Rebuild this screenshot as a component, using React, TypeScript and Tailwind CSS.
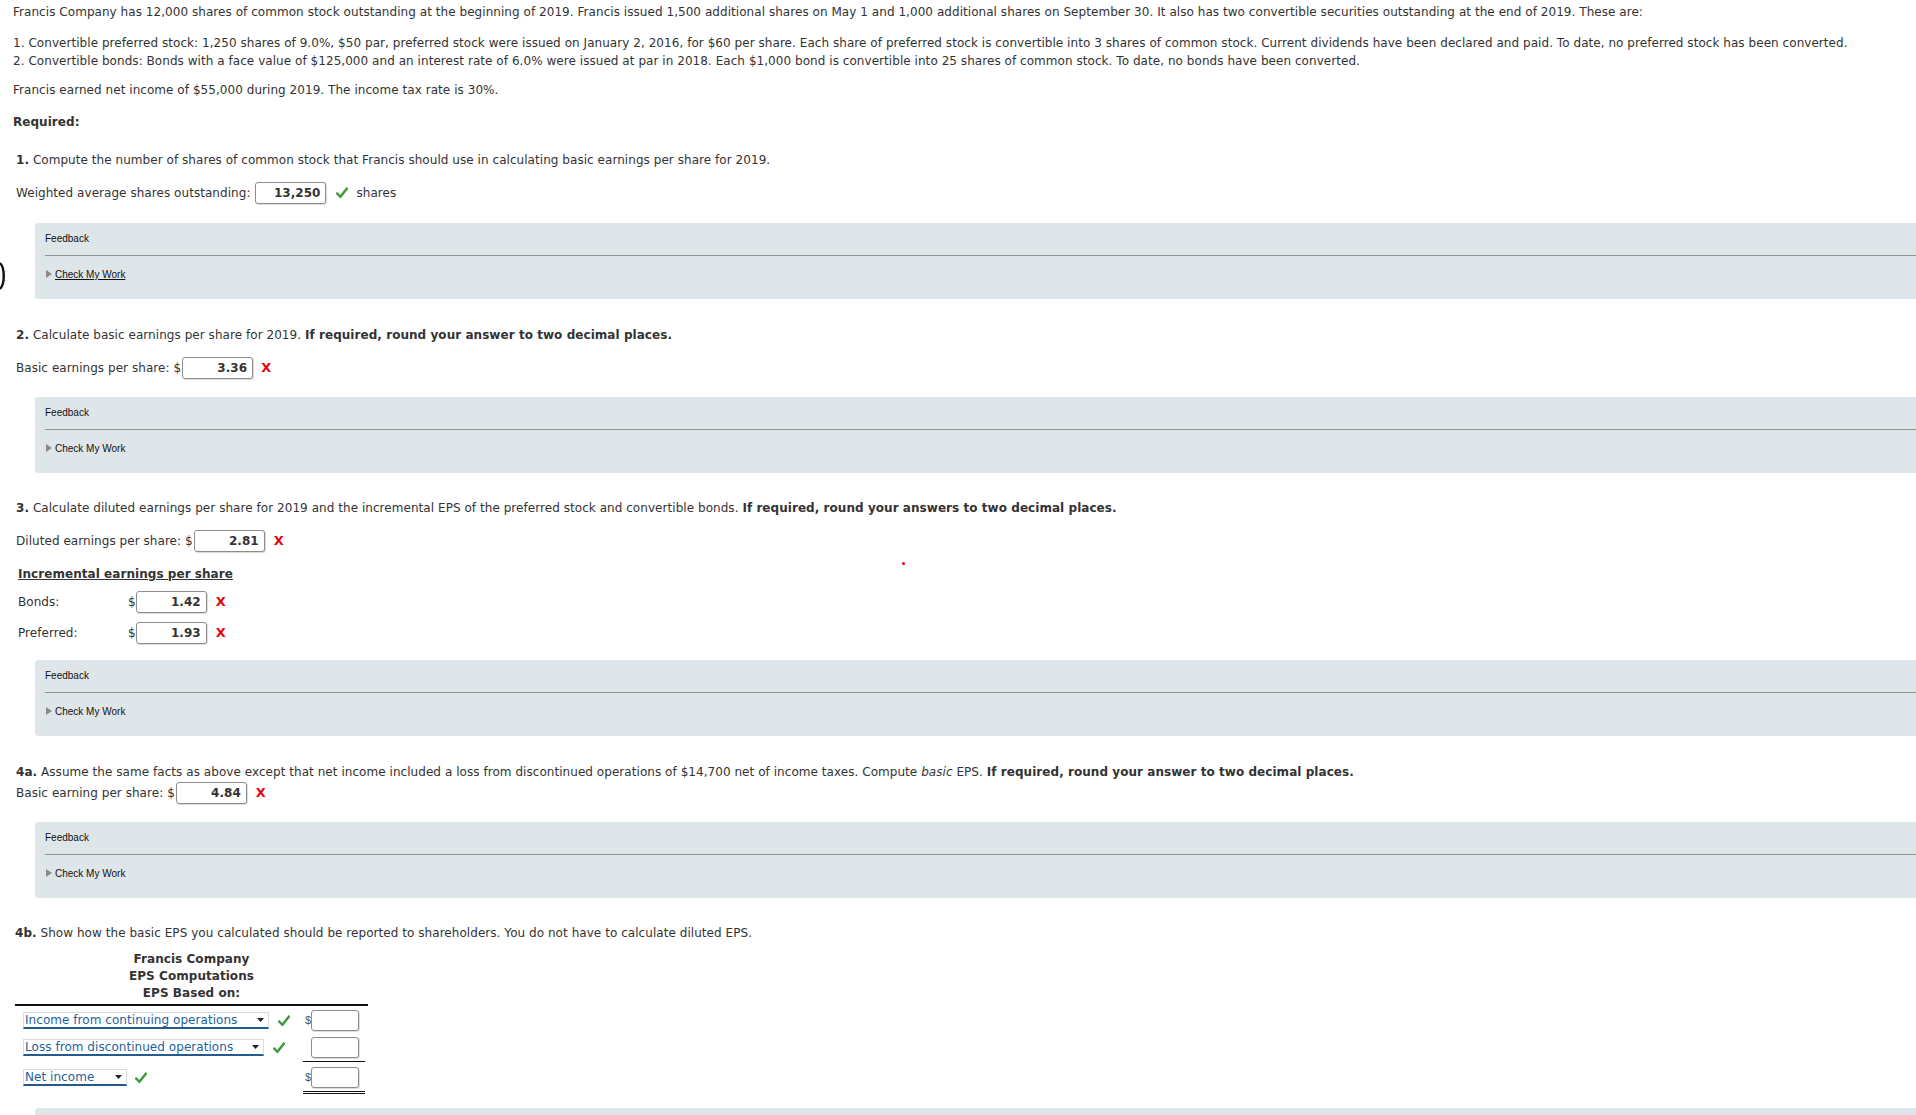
import React from 'react';

function Check() {
    return (
        <svg width="12" height="12" viewBox="0 0 12 12" className="shrink-0">
            <path d="M1.2 6.6 L4.4 9.8 L10.8 1.8" fill="none" stroke="#3a9a3a" strokeWidth="2.4" strokeLinecap="square" />
        </svg>
    );
}

function Wrong() {
    return <span className="text-[#e8000b] font-bold text-[13px] leading-none">X</span>;
}

function Answer({ value }: { value: string }) {
    return (
        <div className="w-[71px] h-[22px] shrink-0 border border-[#8c8c8c] rounded-[3px] shadow-[1px_1px_1px_rgba(0,0,0,0.15)] bg-white flex items-center justify-end pr-[5px] font-bold text-[#333]">
            {value}
        </div>
    );
}

function Feedback({ underline = false }: { underline?: boolean }) {
    return (
        <div className="ml-[35px] bg-[#dfe6e9] rounded-l-[3px] pt-[10px] pb-[18px] font-['Liberation_Sans',Arial,sans-serif] text-[10px] text-[#111] tracking-normal">
            <div className="pl-[10px] leading-[12px]">Feedback</div>
            <div className="ml-[10px] mt-[10px] h-px bg-[#8f9597]" />
            <div className="pl-[11px] mt-[13px] leading-[12px] flex items-center">
                <svg width="6" height="8" viewBox="0 0 6 8" className="mr-[3px] mb-[2px]">
                    <path d="M0 0 L6 4 L0 8 Z" fill="#8a8a8a" />
                </svg>
                <span className={underline ? 'underline' : ''}>Check My Work</span>
            </div>
        </div>
    );
}

function Dropdown({ label, width }: { label: string; width: string }) {
    return (
        <div className={`${width} h-[17px] flex items-center border border-[#dcdcdc] border-b-2 border-b-[#245b8c] bg-white`}>
            <span className="flex-1 pl-[1px] text-[#1f5f9c] leading-[14px] whitespace-nowrap">{label}</span>
            <svg width="7" height="4" viewBox="0 0 7 4" className="mr-[4px]">
                <path d="M0 0 H7 L3.5 4 Z" fill="#222" />
            </svg>
        </div>
    );
}

function Amount({ dollar }: { dollar: boolean }) {
    return (
        <div className="flex items-center">
            <span className="w-[8px] pl-[2px] text-[11px] text-[#555] font-['Liberation_Sans',Arial,sans-serif]">{dollar ? '$' : ''}</span>
            <div className="w-[48px] h-[21px] border border-[#8c8c8c] rounded-[3px] shadow-[1px_1px_1px_rgba(0,0,0,0.15)] bg-white" />
        </div>
    );
}

export default function App() {
    return (
        <div className="relative min-h-screen w-full overflow-hidden bg-white text-[12px] tracking-[0.05px] text-[#333] font-['DejaVu_Sans',Verdana,sans-serif]">
            {/* stray marks on the page */}
            <svg width="6" height="28" viewBox="0 0 6 28" className="absolute left-0 top-[262px]">
                <path d="M0 1 C5 6 5 22 0 27" fill="none" stroke="#111" strokeWidth="2.4" />
            </svg>
            <div className="absolute left-[902px] top-[562px] w-[3px] h-[3px] rounded-full bg-[#e8000b]" />

            {/* problem text */}
            <div className="pl-[13px] pt-[4px]">
                <p className="leading-[16px]">
                    Francis Company has 12,000 shares of common stock outstanding at the beginning of 2019. Francis issued 1,500 additional shares on May 1 and 1,000 additional shares on September 30. It also has two convertible securities outstanding at the end of 2019. These are:
                </p>
                <div className="mt-[14px] leading-[18px]">
                    <p>1. Convertible preferred stock: 1,250 shares of 9.0%, $50 par, preferred stock were issued on January 2, 2016, for $60 per share. Each share of preferred stock is convertible into 3 shares of common stock. Current dividends have been declared and paid. To date, no preferred stock has been converted.</p>
                    <p>2. Convertible bonds: Bonds with a face value of $125,000 and an interest rate of 6.0% were issued at par in 2018. Each $1,000 bond is convertible into 25 shares of common stock. To date, no bonds have been converted.</p>
                </div>
                <p className="mt-[12px] leading-[16px]">Francis earned net income of $55,000 during 2019. The income tax rate is 30%.</p>
                <p className="mt-[16px] leading-[16px] font-bold">Required:</p>
            </div>

            {/* 1 */}
            <div className="pl-[16px]">
                <p className="mt-[22px] leading-[16px]"><b>1.</b> Compute the number of shares of common stock that Francis should use in calculating basic earnings per share for 2019.</p>
                <div className="mt-[14px] flex items-center">
                    <span>Weighted average shares outstanding:</span>
                    <span className="ml-[5px]"><Answer value="13,250" /></span>
                    <span className="ml-[10px]"><Check /></span>
                    <span className="ml-[8px]">shares</span>
                </div>
            </div>
            <div className="mt-[19px]"><Feedback underline /></div>

            {/* 2 */}
            <div className="pl-[16px]">
                <p className="mt-[28px] leading-[16px]"><b>2.</b> Calculate basic earnings per share for 2019. <b>If required, round your answer to two decimal places.</b></p>
                <div className="mt-[14px] flex items-center">
                    <span>Basic earnings per share: $</span>
                    <span className="ml-px"><Answer value="3.36" /></span>
                    <span className="ml-[8px]"><Wrong /></span>
                </div>
            </div>
            <div className="mt-[18px]"><Feedback /></div>

            {/* 3 */}
            <div className="pl-[16px]">
                <p className="mt-[27px] leading-[16px]"><b>3.</b> Calculate diluted earnings per share for 2019 and the incremental EPS of the preferred stock and convertible bonds. <b>If required, round your answers to two decimal places.</b></p>
                <div className="mt-[14px] flex items-center">
                    <span>Diluted earnings per share: $</span>
                    <span className="ml-px"><Answer value="2.81" /></span>
                    <span className="ml-[9px]"><Wrong /></span>
                </div>
                <p className="mt-[14px] ml-[2px] leading-[16px] font-bold underline">Incremental earnings per share</p>
                <div className="ml-[2px] mt-[9px] flex items-center">
                    <span className="w-[110px]">Bonds:</span>
                    <span>$</span>
                    <Answer value="1.42" />
                    <span className="ml-[9px]"><Wrong /></span>
                </div>
                <div className="ml-[2px] mt-[9px] flex items-center">
                    <span className="w-[110px]">Preferred:</span>
                    <span>$</span>
                    <Answer value="1.93" />
                    <span className="ml-[9px]"><Wrong /></span>
                </div>
            </div>
            <div className="mt-[16px]"><Feedback /></div>

            {/* 4a */}
            <div className="pl-[16px]">
                <p className="mt-[28px] leading-[16px]"><b>4a.</b> Assume the same facts as above except that net income included a loss from discontinued operations of $14,700 net of income taxes. Compute <i>basic</i> EPS. <b>If required, round your answer to two decimal places.</b></p>
                <div className="mt-[2px] flex items-center">
                    <span>Basic earning per share: $</span>
                    <span className="ml-px"><Answer value="4.84" /></span>
                    <span className="ml-[9px]"><Wrong /></span>
                </div>
            </div>
            <div className="mt-[18px]"><Feedback /></div>

            {/* 4b */}
            <div className="pl-[15px]">
                <p className="mt-[27px] leading-[16px]"><b>4b.</b> Show how the basic EPS you calculated should be reported to shareholders. You do not have to calculate diluted EPS.</p>
                <div className="w-[353px] mt-[10px]">
                    <div className="text-center font-bold leading-[17px]">
                        <p>Francis Company</p>
                        <p>EPS Computations</p>
                        <p>EPS Based on:</p>
                    </div>
                    <div className="mt-[2px] h-[2px] bg-[#111]" />
                    <div className="mt-[4px] flex items-start">
                        <div className="flex-1 h-[21px] pl-[8px] flex items-center">
                            <Dropdown label="Income from continuing operations" width="w-[246px]" />
                            <span className="ml-[9px]"><Check /></span>
                        </div>
                        <div className="w-[62px] mr-[3px]">
                            <Amount dollar />
                        </div>
                    </div>
                    <div className="mt-[6px] flex items-start">
                        <div className="flex-1 h-[21px] pl-[8px] flex items-center">
                            <Dropdown label="Loss from discontinued operations" width="w-[241px]" />
                            <span className="ml-[9px]"><Check /></span>
                        </div>
                        <div className="w-[62px] mr-[3px] pb-[3px] border-b border-[#111]">
                            <Amount dollar={false} />
                        </div>
                    </div>
                    <div className="mt-[5px] flex items-start">
                        <div className="flex-1 h-[21px] pl-[8px] flex items-center">
                            <Dropdown label="Net income" width="w-[104px]" />
                            <span className="ml-[8px]"><Check /></span>
                        </div>
                        <div className="w-[62px] mr-[3px] pb-[3px] border-b-[3px] border-double border-[#111]">
                            <Amount dollar />
                        </div>
                    </div>
                </div>
            </div>
            {/* next feedback panel, only its top edge is in view */}
            <div className="mt-[14px] ml-[35px] h-[76px] bg-[#dfe6e9] rounded-l-[3px]" />
        </div>
    );
}
